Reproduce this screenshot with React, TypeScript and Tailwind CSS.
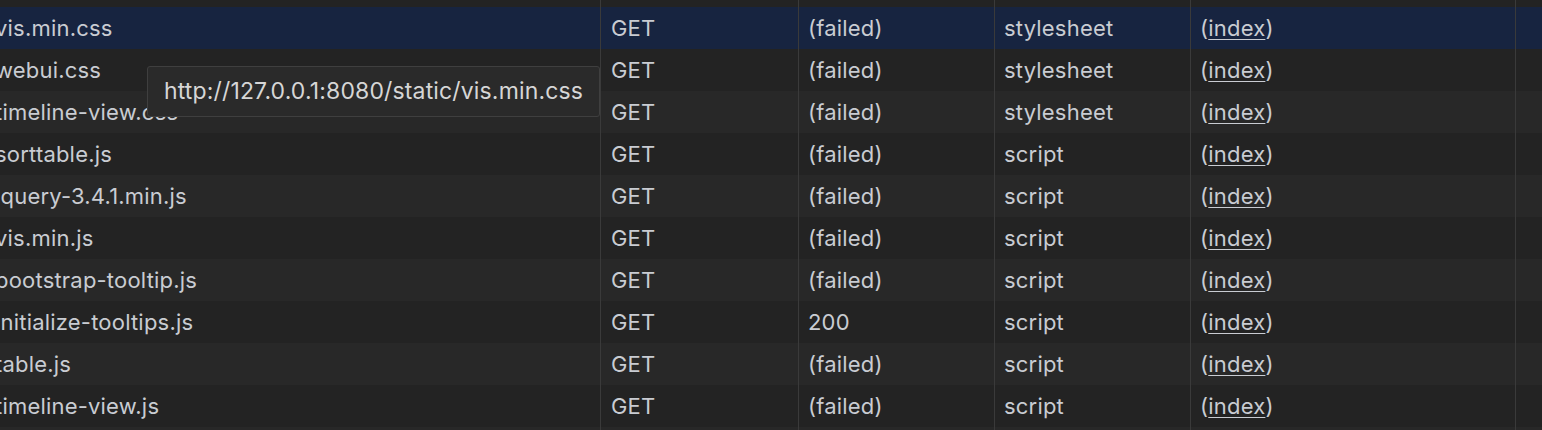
import React from "react";

type Row = { name: string; method: string; status: string; type: string };

const rows: Row[] = [
  { name: "spark-logo-77x50px-hd.png", method: "GET", status: "(failed)", type: "png" },
  { name: "vis.min.css", method: "GET", status: "(failed)", type: "stylesheet" },
  { name: "webui.css", method: "GET", status: "(failed)", type: "stylesheet" },
  { name: "timeline-view.css", method: "GET", status: "(failed)", type: "stylesheet" },
  { name: "sorttable.js", method: "GET", status: "(failed)", type: "script" },
  { name: "jquery-3.4.1.min.js", method: "GET", status: "(failed)", type: "script" },
  { name: "vis.min.js", method: "GET", status: "(failed)", type: "script" },
  { name: "bootstrap-tooltip.js", method: "GET", status: "(failed)", type: "script" },
  { name: "initialize-tooltips.js", method: "GET", status: "200", type: "script" },
  { name: "table.js", method: "GET", status: "(failed)", type: "script" },
  { name: "timeline-view.js", method: "GET", status: "(failed)", type: "script" },
  { name: "log-view.js", method: "GET", status: "(failed)", type: "script" },
];

export default function App() {
  return (
    <div
      className="relative h-[430px] w-[1542px] overflow-hidden bg-[#232323] text-[22px] tracking-[0.2px] text-[#c9ccd2]"
      style={{ fontFamily: "Inter, 'Liberation Sans', sans-serif" }}
    >
      <div className="-mt-[35px] flex flex-col">
        {rows.map((r, i) => {
          const bg = i === 1 ? "bg-[#172440]" : i % 2 === 0 ? "bg-[#232323]" : "bg-[#282828]";
          return (
            <div key={i} className={`flex h-[42px] items-center ${bg}`}>
              <div className="flex h-full w-[601px] items-center overflow-hidden border-r border-[#3a3a3a]">
                <span className="-ml-[5px] whitespace-nowrap">{r.name}</span>
              </div>
              <div className="flex h-full w-[198px] items-center border-r border-[#3a3a3a] pl-[10px]">
                {r.method}
              </div>
              <div className="flex h-full w-[196px] items-center border-r border-[#3a3a3a] pl-[9px]">
                {r.status}
              </div>
              <div className="flex h-full w-[196px] items-center border-r border-[#3a3a3a] pl-[9px]">
                {r.type}
              </div>
              <div className="flex h-full w-[325px] items-center border-r border-[#3a3a3a] pl-[9px]">
                <span>
                  (<span className="underline decoration-1 underline-offset-[3px]">index</span>)
                </span>
              </div>
              <div className="h-full flex-1" />
            </div>
          );
        })}
      </div>
      <div className="absolute left-[147px] top-[66px] flex h-[51px] w-[453px] items-center whitespace-nowrap rounded-[3px] border border-[#3f3f3f] bg-[#2a2a2a] pl-[16px] text-[23px] tracking-[0.15px] text-[#d6d6d6]">
        http://127.0.0.1:8080/static/vis.min.css
      </div>
    </div>
  );
}
